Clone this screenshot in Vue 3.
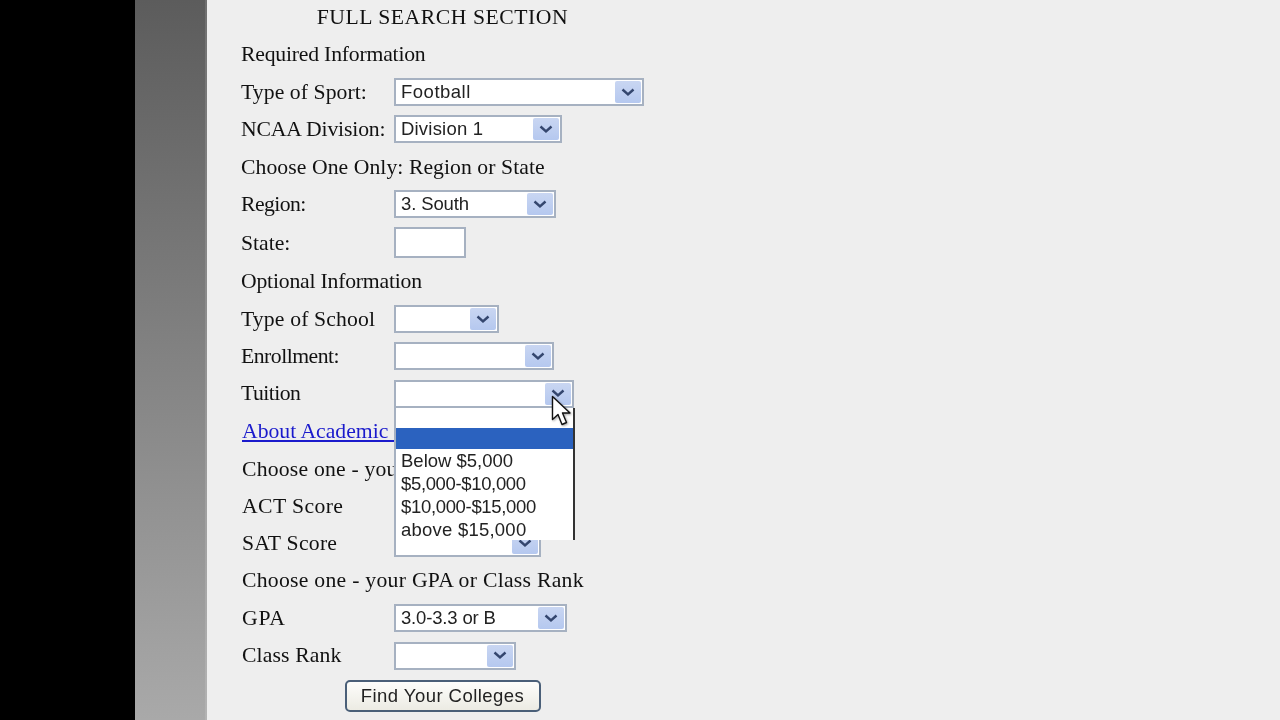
<script setup>
const rows = [
  { label: 'Required Information', kind: 'head', ls: -0.2 },
  { label: 'Type of Sport:', value: 'Football', w: 250, ls: 0.07, vs: 0.5 },
  { label: 'NCAA Division:', value: 'Division 1', w: 168, ls: -0.14, vs: 0.2 },
  { label: 'Choose One Only: Region or State', kind: 'head', ls: 0.06 },
  { label: 'Region:', value: '3. South', w: 162, ls: -0.55, vs: -0.12 },
  { label: 'State:', kind: 'input', ls: 0 },
  { label: 'Optional Information', kind: 'head', ls: -0.2 },
  { label: 'Type of School', value: '', w: 105, ls: 0.14 },
  { label: 'Enrollment:', value: '', w: 160, ls: -0.5 },
  { label: 'Tuition', value: '', w: 180, open: true, ls: -0.55 },
  { label: 'About Academic Requirements', kind: 'link', ls: 0, nudge: true },
  { label: 'Choose one - your ACT or SAT', kind: 'head', ls: 0.2, nudge: true, clip: true },
  { label: 'ACT Score', value: '', w: 147, ls: 0.4, nudge: true },
  { label: 'SAT Score', value: '', w: 147, ls: 0.25, nudge: true },
  { label: 'Choose one - your GPA or Class Rank', kind: 'head', ls: 0.27, nudge: true },
  { label: 'GPA', value: '3.0-3.3 or B', w: 173, ls: 0.8, vs: -0.17, nudge: true },
  { label: 'Class Rank', value: '', w: 122, ls: 0.12, nudge: true }
]
const options = [
  { text: '', ls: 0 },
  { text: '', ls: 0 },
  { text: 'Below $5,000', ls: 0 },
  { text: '$5,000-$10,000', ls: -0.35 },
  { text: '$10,000-$15,000', ls: -0.33 },
  { text: 'above $15,000', ls: 0.23 }
]
const spacing = (v) => ({ letterSpacing: (v || 0) + 'px' })
</script>

<template>
  <div class="page">
    <div class="black"></div>
    <div class="rail"></div>
    <main class="panel">
      <h1 class="title">FULL SEARCH SECTION</h1>
      <div
        v-for="row in rows"
        :key="row.label"
        class="row"
        :class="{ tall: row.kind === 'input' }"
      >
        <a v-if="row.kind === 'link'" class="link nudge" href="#">{{ row.label }}</a>
        <span v-else-if="row.kind === 'head'" class="label wide" :class="{ nudge: row.nudge, clip: row.clip }" :style="spacing(row.ls)">{{ row.label }}</span>
        <template v-else>
          <span class="label" :class="{ nudge: row.nudge }" :style="spacing(row.ls)">{{ row.label }}</span>
          <div v-if="row.kind === 'input'" class="state"></div>
          <div v-else class="select" :style="{ width: row.w + 'px' }">
            <span class="value" :style="spacing(row.vs)">{{ row.value }}</span>
            <span class="arrow">
              <svg width="14" height="9" viewBox="0 0 14 9"><path d="M1.500 1.500l5.500 5 5.500-5" fill="none" stroke="#34466e" stroke-width="2.400"/></svg>
            </span>
            <template v-if="row.open">
              <ul class="menu">
                <li v-for="(o, i) in options" :key="i" :class="{ picked: i === 1, first: i === 0 }" :style="spacing(o.ls)">{{ o.text }}</li>
              </ul>
              <svg class="cursor" width="24" height="36" viewBox="0 0 24 36">
                <path d="M1.500 1.500v23l5.500-5 4 10 4.500-2-4-9.500h7.500z" fill="#fff" stroke="#111" stroke-width="1.400" stroke-linejoin="round"/>
              </svg>
            </template>
          </div>
        </template>
      </div>
      <div class="actions">
        <button class="submit" type="button">Find Your Colleges</button>
      </div>
    </main>
  </div>
</template>

<style>
html, body { margin: 0; background: #000; }
</style>

<style scoped>
.page {
  display: flex;
  width: 1280px;
  height: 720px;
  overflow: hidden;
  background: #eeeeee;
  filter: blur(0.35px);
}
.black { width: 135px; flex: none; background: #000; }
.rail {
  width: 72px;
  flex: none;
  background: linear-gradient(to bottom, #5c5c5c, #a9a9a9);
  box-shadow: inset -2px 0 0 rgba(255, 255, 255, 0.12);
}
.panel {
  flex: 1;
  padding-left: 34px;
  font-family: "Liberation Serif", serif;
  font-size: 21.7px;
  color: #111;
}
.title {
  margin: 0;
  width: 403px;
  height: 36px;
  font-size: 21.7px;
  font-weight: 400;
  letter-spacing: 0.53px;
  line-height: 34px;
  text-align: center;
}
.row {
  display: flex;
  align-items: center;
  height: 37.4px;
}
.row.tall { height: 40px; }
.label { width: 153px; flex: none; white-space: nowrap; line-height: 1; margin-top: 1px; }
.label.wide { width: auto; }
.label.nudge { width: 152px; padding-left: 1px; }
.label.clip { width: 152px; overflow: hidden; line-height: 1.2; }
.link { color: #1a1acc; white-space: nowrap; margin-top: 1px; }
.link.nudge { padding-left: 1px; }
.select {
  position: relative;
  display: flex;
  align-items: center;
  justify-content: space-between;
  box-sizing: border-box;
  height: 28px;
  padding: 0 1px 0 5px;
  background: #fff;
  border: 2px solid #a6b1c1;
  font-family: "Liberation Sans", sans-serif;
  font-size: 18.5px;
  color: #222;
}
.value { white-space: nowrap; }
.arrow {
  display: flex;
  align-items: center;
  justify-content: center;
  width: 26px;
  height: 22px;
  background: linear-gradient(to bottom, #c9d6f2, #b5c8ef);
  border-radius: 2px;
}
.state {
  box-sizing: border-box;
  width: 72px;
  height: 31px;
  background: #fff;
  border: 2px solid #a6b1c1;
}
.menu {
  position: absolute;
  z-index: 2;
  top: 26px;
  left: -2px;
  box-sizing: border-box;
  width: 181px;
  height: 132px;
  margin: 0;
  padding: 0;
  overflow: hidden;
  list-style: none;
  background: #fff;
  border-left: 2px solid #a6b1c1;
  border-right: 2px solid #333;
}
.menu li {
  box-sizing: border-box;
  height: 23px;
  padding-left: 5px;
  line-height: 23px;
  white-space: nowrap;
}
.menu li.first { height: 20px; }
.menu li.picked { height: 21px; background: #2b62bf; }
.cursor {
  position: absolute;
  z-index: 3;
  top: 13px;
  left: 155px;
  filter: drop-shadow(1px 1px 1px rgba(0, 0, 0, 0.35));
}
.actions {
  display: flex;
  width: 403px;
  padding-top: 6px;
  justify-content: center;
}
.submit {
  box-sizing: border-box;
  width: 196px;
  height: 32px;
  padding: 0;
  border: 2px solid #4a5f78;
  border-radius: 5px;
  background: linear-gradient(to bottom, #fdfdfb, #ecebe3);
  font-family: "Liberation Sans", sans-serif;
  font-size: 18.5px;
  letter-spacing: 0.45px;
  color: #222;
}
</style>
